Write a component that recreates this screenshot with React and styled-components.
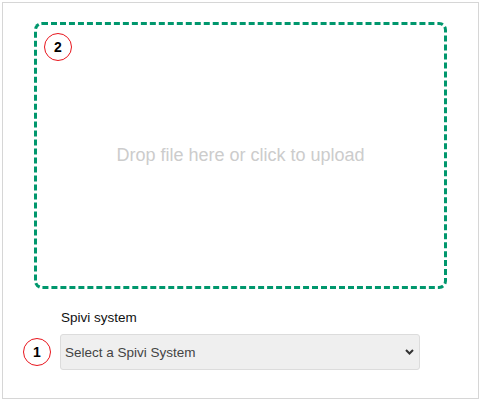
import React from 'react';
import styled, { createGlobalStyle } from 'styled-components';

const GlobalStyle = createGlobalStyle`
  html, body {
    margin: 0;
    padding: 0;
    background: #fff;
  }
  body {
    font-family: "Liberation Sans", Arial, sans-serif;
  }
`;

const App = () => {
  return (
    <Page>
      <GlobalStyle />
      <Frame>
        <DropZone>
          <Badge $top="8px" $left="7px">2</Badge>
          <DropText>Drop file here or click to upload</DropText>
        </DropZone>
        <FormGroup>
          <Label htmlFor="spivi">Spivi system</Label>
          <SelectRow>
            <Badge $top="50%" $left="-37px" $center>1</Badge>
            <Select id="spivi" defaultValue="">
              <option value="" disabled>
                Select a Spivi System
              </option>
            </Select>
            <Chevron viewBox="0 0 9 6" aria-hidden="true">
              <path d="M1 1 L4.5 4.5 L8 1" fill="none" stroke="#333" strokeWidth="2" />
            </Chevron>
          </SelectRow>
        </FormGroup>
      </Frame>
    </Page>
  );
};

export default App;

const Page = styled.div`
  padding: 2px;
`;

const Frame = styled.div`
  box-sizing: border-box;
  width: 477px;
  height: 397px;
  border: 1px solid #d6d6d6;
  padding: 19px 31px 0;
  display: flex;
  flex-direction: column;
`;

const DropZone = styled.div`
  position: relative;
  box-sizing: border-box;
  height: 267px;
  border: 3px dashed #00976d;
  border-radius: 8px;
  display: flex;
  align-items: center;
  justify-content: center;
  cursor: pointer;
`;

const DropText = styled.span`
  font-size: 18px;
  color: #cccccc;
`;

const Badge = styled.span`
  position: absolute;
  top: ${(p) => p.$top};
  left: ${(p) => p.$left};
  transform: ${(p) => (p.$center ? 'translateY(-50%)' : 'none')};
  box-sizing: border-box;
  width: 28px;
  height: 28px;
  border: 1px solid #e8141c;
  border-radius: 50%;
  background: #fff;
  display: flex;
  align-items: center;
  justify-content: center;
  font-size: 14px;
  font-weight: bold;
  color: #000;
`;

const FormGroup = styled.div`
  margin: 21px 0 0 26px;
  width: 360px;
  display: flex;
  flex-direction: column;
  gap: 9px;
`;

const Label = styled.label`
  font-size: 13.5px;
  line-height: 15px;
  color: #111;
  padding-left: 1px;
`;

const SelectRow = styled.div`
  position: relative;
`;

const Select = styled.select`
  appearance: none;
  box-sizing: border-box;
  width: 360px;
  height: 36px;
  padding: 0 24px 0 4px;
  border: 1px solid #dcdcdc;
  border-radius: 3px;
  background: #efefef;
  font-family: "Liberation Sans", Arial, sans-serif;
  font-size: 13.5px;
  color: #444;
  outline: none;
`;

const Chevron = styled.svg`
  position: absolute;
  right: 6px;
  top: 50%;
  width: 9px;
  height: 6px;
  transform: translateY(-50%);
  pointer-events: none;
`;
